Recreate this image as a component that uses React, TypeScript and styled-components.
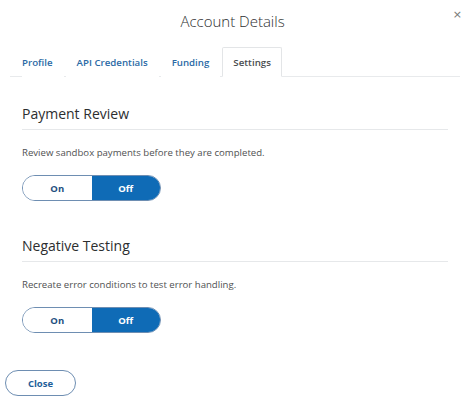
import React, { useState } from "react";
import styled, { createGlobalStyle } from "styled-components";

const GlobalStyle = createGlobalStyle`
  html, body {
    margin: 0;
    padding: 0;
    background: #ffffff;
    font-family: "Open Sans", "Noto Sans", sans-serif;
    color: #2c2e2f;
  }
`;

const Modal = styled.div`
  width: 474px;
  height: 399px;
  box-sizing: border-box;
  display: flex;
  flex-direction: column;
  position: relative;
`;

const Header = styled.div`
  height: 47px;
  box-sizing: border-box;
  display: flex;
  align-items: flex-start;
  justify-content: center;
  padding: 11px 9px 0 0;
`;

const Title = styled.h1`
  margin: 0;
  font-size: 15px;
  line-height: 20px;
  font-weight: 300;
  color: #2c2e2f;
`;

const CloseX = styled.button`
  position: absolute;
  top: 8px;
  right: 12px;
  border: none;
  background: none;
  padding: 0;
  font-size: 11px;
  color: #777;
  cursor: pointer;
  font-family: "DejaVu Sans", sans-serif;
`;

const TabBar = styled.div`
  margin: 0 14px 0 10px;
  display: flex;
  align-items: flex-end;
  border-bottom: 1px solid #e8eaec;
  padding-left: 12px;
  gap: 2px;
`;

const Tab = styled.button<{ $active?: boolean }>`
  font-family: "Open Sans", "Noto Sans", sans-serif;
  font-size: 9.7px;
  font-weight: 600;
  height: 30px;
  padding: 0 10px;
  margin-bottom: -1px;
  background: #fff;
  cursor: pointer;
  color: ${(p) => (p.$active ? "#4a4d4f" : "#2b6aa5")};
  border: 1px solid ${(p) => (p.$active ? "#e3e5e7" : "transparent")};
  border-bottom-color: ${(p) => (p.$active ? "#fff" : "transparent")};
  border-radius: 2px 2px 0 0;
  &:first-child {
    padding-left: 0;
    border-left: none;
  }
`;

const Content = styled.div`
  padding: 27px 26px 0 22px;
  display: flex;
  flex-direction: column;
`;

const Section = styled.section`
  display: flex;
  flex-direction: column;
  margin-bottom: 35px;
`;

const Heading = styled.h2`
  margin: 0;
  font-size: 14px;
  line-height: 20px;
  font-weight: 500;
  color: #2c2e2f;
  padding-bottom: 5px;
  border-bottom: 1px solid #e6e8ea;
`;

const Description = styled.p`
  margin: 16px 0 15px;
  font-size: 9.6px;
  line-height: 14px;
  color: #4f5152;
`;

const Toggle = styled.div`
  display: flex;
  width: 139px;
  height: 26px;
  box-sizing: border-box;
  border: 1px solid #6e8eb2;
  border-radius: 13px;
  overflow: hidden;
`;

const ToggleOption = styled.button<{ $selected?: boolean }>`
  flex: 1;
  border: none;
  font-family: "Open Sans", "Noto Sans", sans-serif;
  font-size: 9.5px;
  font-weight: 700;
  cursor: pointer;
  background: ${(p) => (p.$selected ? "#0f6bb6" : "#ffffff")};
  color: ${(p) => (p.$selected ? "#ffffff" : "#1f4f7f")};
`;

const Footer = styled.div`
  padding: 0 5px;
  margin-top: auto;
  margin-bottom: 3px;
`;

const CloseButton = styled.button`
  width: 71px;
  height: 26px;
  border: 1px solid #6e8eb2;
  border-radius: 13px;
  background: #fff;
  color: #1f5f9a;
  font-family: "Open Sans", "Noto Sans", sans-serif;
  font-size: 9.5px;
  font-weight: 700;
  cursor: pointer;
`;

const tabs = ["Profile", "API Credentials", "Funding", "Settings"];

const settings = [
  {
    title: "Payment Review",
    text: "Review sandbox payments before they are completed.",
  },
  {
    title: "Negative Testing",
    text: "Recreate error conditions to test error handling.",
  },
];

const SettingRow = ({ title, text }: { title: string; text: string }) => {
  const [on, setOn] = useState(false);
  return (
    <Section>
      <Heading>{title}</Heading>
      <Description>{text}</Description>
      <Toggle>
        <ToggleOption $selected={on} onClick={() => setOn(true)}>
          On
        </ToggleOption>
        <ToggleOption $selected={!on} onClick={() => setOn(false)}>
          Off
        </ToggleOption>
      </Toggle>
    </Section>
  );
};

const App = () => {
  return (
    <>
      <GlobalStyle />
      <Modal>
        <Header>
          <Title>Account Details</Title>
        </Header>
        <CloseX aria-label="close">×</CloseX>
        <TabBar>
          {tabs.map((t) => (
            <Tab key={t} $active={t === "Settings"}>
              {t}
            </Tab>
          ))}
        </TabBar>
        <Content>
          {settings.map((s) => (
            <SettingRow key={s.title} title={s.title} text={s.text} />
          ))}
        </Content>
        <Footer>
          <CloseButton>Close</CloseButton>
        </Footer>
      </Modal>
    </>
  );
};

export default App;
